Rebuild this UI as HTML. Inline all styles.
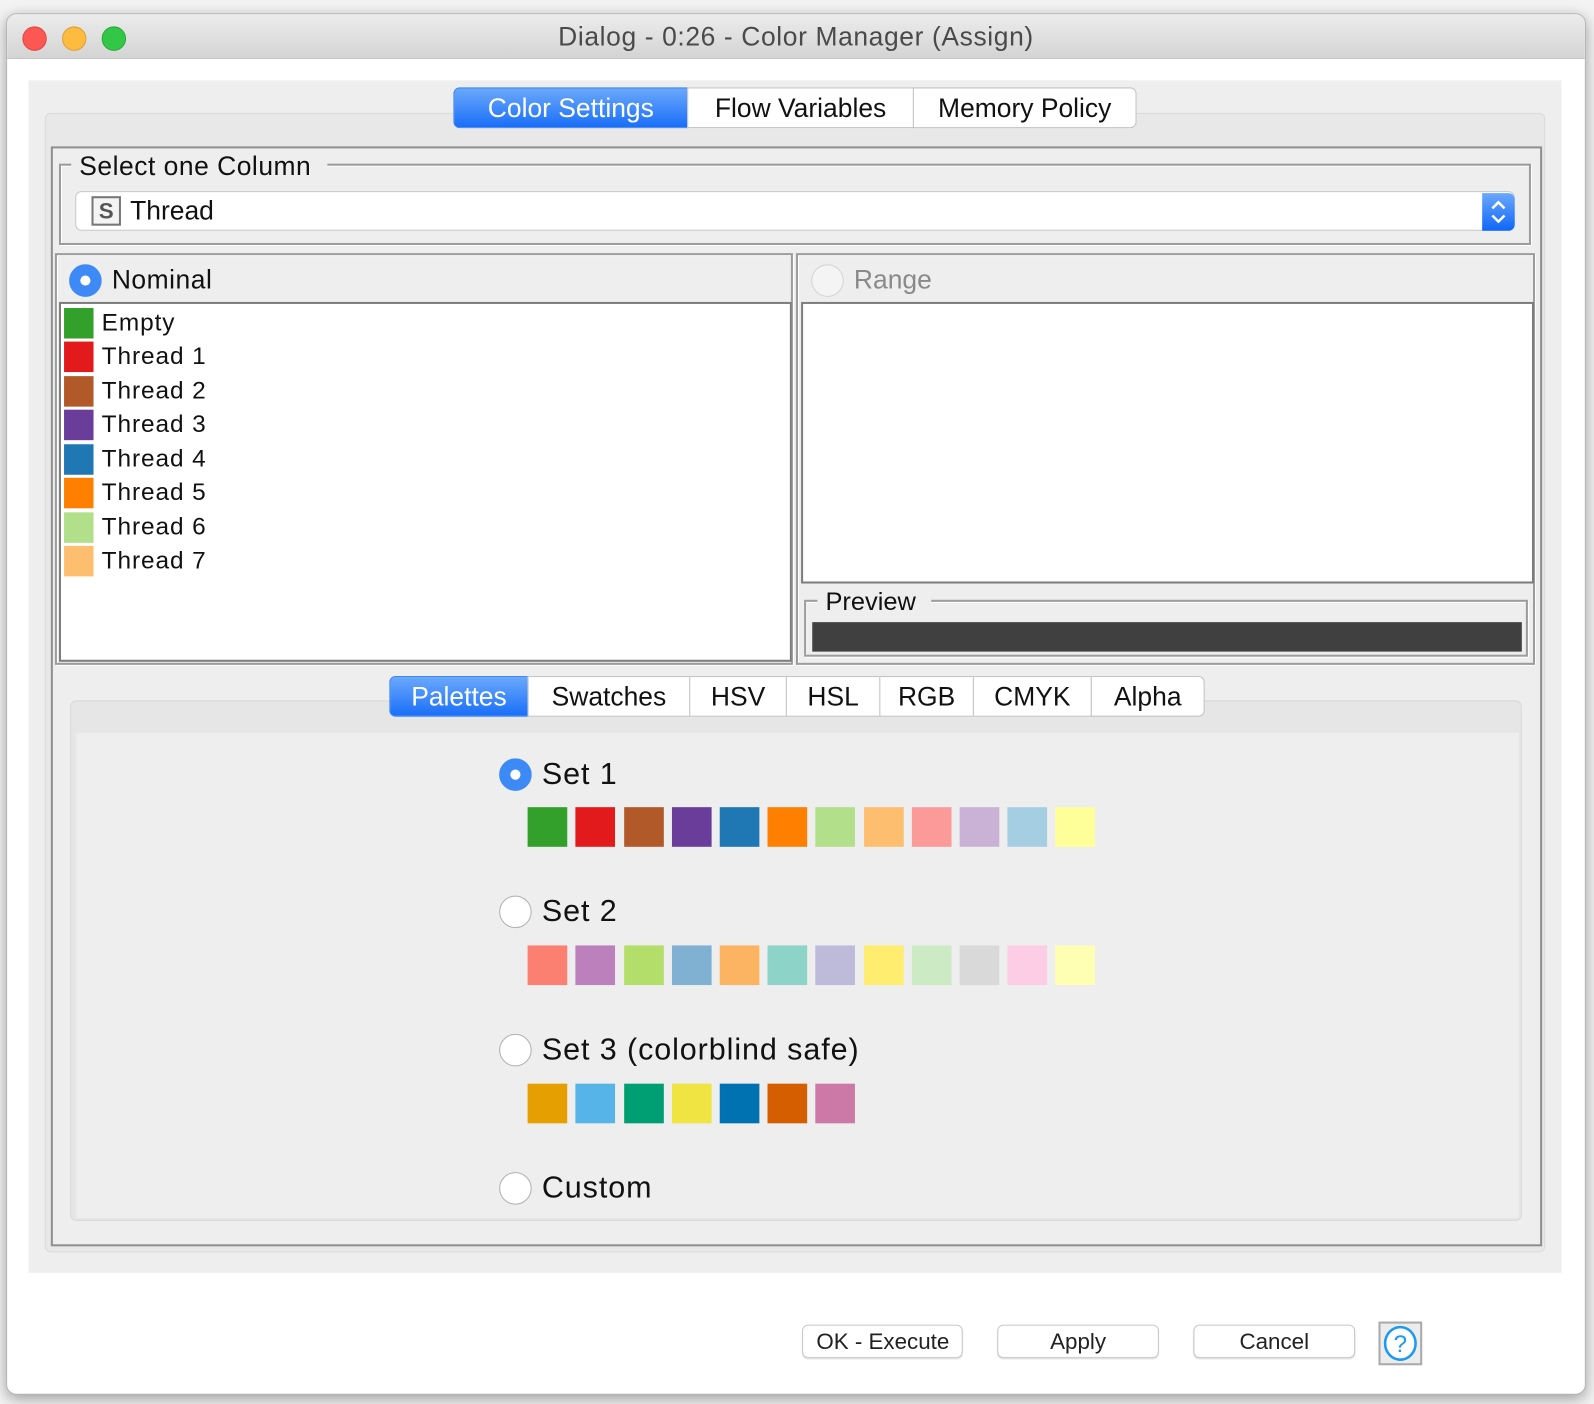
<!DOCTYPE html>
<html><head><meta charset="utf-8"><style>
*{box-sizing:border-box;margin:0;padding:0}
html,body{width:1594px;height:1404px;overflow:hidden;background:#f3f3f3;font-family:"Liberation Sans",sans-serif}
#s{position:absolute;left:0;top:0;width:1568px;height:1381px;transform:scale(1.01658);transform-origin:0 0}
.a{position:absolute}
.t{position:absolute;white-space:nowrap;color:#111}
.win{left:6px;top:13px;width:1554px;height:1359px;background:#fff;border-radius:10px;box-shadow:0 4px 14px rgba(0,0,0,.35);border:1px solid #b5b5b5;overflow:hidden}
.tb{left:0;top:0;width:100%;height:44px;background:linear-gradient(#ececec,#d4d4d4);border-bottom:1px solid #c2c2c2}
.dot{position:absolute;top:12px;width:24px;height:24px;border-radius:50%}
.etch{border:2px solid #9c9c9c;box-shadow:inset 1px 1px 0 #fff,1px 1px 0 #fff}
.tab{position:absolute;height:40px;background:#fff;border:1px solid #c3c3c3;font-size:26px;text-align:center;line-height:38px;color:#111}
.tab.on{background:linear-gradient(#6aa8fb,#1a6ff8);color:#fff;border-color:#3c86f8}
.radio{position:absolute;width:32px;height:32px;border-radius:50%;background:#fff;border:1px solid #b0b0b0}
.radio.on{background:#3d8af7;border-color:#3d8af7}
.radio.on:after{content:"";position:absolute;left:10px;top:10px;width:10px;height:10px;border-radius:50%;background:#fff}
.sw{position:absolute;width:39px;height:39px}
.row{position:absolute;left:63px;height:30px;width:400px}
.row i{position:absolute;left:0;top:0;width:29px;height:30px}
.row span{position:absolute;left:37px;top:0;font-size:24px;line-height:30px;color:#111;letter-spacing:0.9px}
.set{font-size:30px;letter-spacing:0.9px}
.btn{position:absolute;top:1303px;height:33px;background:#fff;border:1px solid #c8c8c8;border-radius:6px;font-size:22px;text-align:center;line-height:31px;color:#222;box-shadow:0 1px 1px rgba(0,0,0,.1)}
</style></head><body><div id="s">
<div class="a win">
 <div class="a tb">
  <div class="dot" style="left:15px;background:#fc5753;border:1px solid #df4744"></div>
  <div class="dot" style="left:54px;background:#fdbc40;border:1px solid #de9f34"></div>
  <div class="dot" style="left:93px;background:#33c748;border:1px solid #27aa35"></div>
  <div class="t" style="left:0;width:100%;text-align:center;top:7px;font-size:26px;letter-spacing:0.6px;color:#4a4a4a">Dialog - 0:26 - Color Manager (Assign)</div>
 </div>
</div>
<div class="a" style="left:28px;top:79px;width:1508px;height:1173px;background:#eeeeee"></div>
<div class="a" style="left:44px;top:111px;width:1476px;height:1121px;background:#e8e8e8;border:1px solid #dadada;border-radius:6px"></div>
<div class="tab on" style="left:446px;top:86px;width:231px;border-radius:6px 0 0 6px">Color Settings</div>
<div class="tab" style="left:676px;top:86px;width:223px">Flow Variables</div>
<div class="tab" style="left:898px;top:86px;width:220px;border-radius:0 6px 6px 0">Memory Policy</div>
<div class="a" style="left:50px;top:144px;width:1467px;height:1082px;background:#eeeeee;border:2px solid #8e8e8e"></div>
<div class="a etch" style="left:58px;top:161px;width:1448px;height:80px"></div>
<div class="a" style="left:70px;top:150px;width:252px;height:24px;background:#eeeeee"></div>
<div class="t" style="left:78px;top:148px;font-size:26px;letter-spacing:0.5px">Select one Column</div>
<div class="a" style="left:74px;top:188px;width:1416px;height:39px;background:#fff;border:1px solid #c8c8c8;border-radius:6px"></div>
<div class="a" style="left:90px;top:193px;width:29px;height:29px;border:2px solid #777;background:#f4f4f4;font-size:22px;font-weight:bold;text-align:center;line-height:25px;color:#555">S</div>
<div class="t" style="left:128px;top:192px;font-size:26px">Thread</div>
<div class="a" style="left:1458px;top:190px;width:32px;height:37px;background:linear-gradient(#6aa8fb,#0f66f8);border-radius:0 6px 6px 0">
<svg width="32" height="37" viewBox="0 0 32 37"><path d="M10 15l6-6 6 6M10 22l6 6 6-6" stroke="#fff" stroke-width="2.5" fill="none"/></svg></div>
<div class="a etch" style="left:54px;top:249px;width:726px;height:405px"></div>
<div class="radio on" style="left:68px;top:260px"></div>
<div class="t" style="left:110px;top:260px;font-size:26px;letter-spacing:0.5px">Nominal</div>
<div class="a" style="left:58px;top:297px;width:721px;height:354px;background:#fff;border:2px solid #7d7d7d"></div>
<div class="row" style="top:303px"><i style="background:#33a02c"></i><span>Empty</span></div>
<div class="row" style="top:336px"><i style="background:#e31a1c"></i><span>Thread 1</span></div>
<div class="row" style="top:370px"><i style="background:#b15928"></i><span>Thread 2</span></div>
<div class="row" style="top:403px"><i style="background:#6a3d9a"></i><span>Thread 3</span></div>
<div class="row" style="top:437px"><i style="background:#1f78b4"></i><span>Thread 4</span></div>
<div class="row" style="top:470px"><i style="background:#ff7f00"></i><span>Thread 5</span></div>
<div class="row" style="top:504px"><i style="background:#b2df8a"></i><span>Thread 6</span></div>
<div class="row" style="top:537px"><i style="background:#fdbf6f"></i><span>Thread 7</span></div>
<div class="a etch" style="left:783px;top:249px;width:727px;height:405px"></div>
<div class="radio" style="left:798px;top:260px;background:#f4f4f4;border-color:#d4d4d4"></div>
<div class="t" style="left:840px;top:260px;font-size:26px;color:#8a8a8a">Range</div>
<div class="a" style="left:788px;top:297px;width:721px;height:277px;background:#fff;border:2px solid #7d7d7d"></div>
<div class="a etch" style="left:791px;top:590px;width:712px;height:56px"></div>
<div class="a" style="left:804px;top:580px;width:112px;height:22px;background:#eeeeee"></div>
<div class="t" style="left:812px;top:578px;font-size:25px">Preview</div>
<div class="a" style="left:799px;top:612px;width:698px;height:29px;background:#404040"></div>
<div class="a" style="left:69px;top:689px;width:1428px;height:512px;background:#e6e6e6;border:1px solid #d8d8d8;border-radius:6px"></div>
<div class="a" style="left:75px;top:721px;width:1419px;height:477px;background:#eeeeee"></div>
<div class="tab on" style="left:383px;top:665px;width:137px;border-radius:6px 0 0 6px">Palettes</div>
<div class="tab" style="left:519px;top:665px;width:160px">Swatches</div>
<div class="tab" style="left:678px;top:665px;width:96px">HSV</div>
<div class="tab" style="left:773px;top:665px;width:93px">HSL</div>
<div class="tab" style="left:865px;top:665px;width:93px">RGB</div>
<div class="tab" style="left:957px;top:665px;width:117px">CMYK</div>
<div class="tab" style="left:1073px;top:665px;width:112px;border-radius:0 6px 6px 0">Alpha</div>
<div class="radio on" style="left:491px;top:746px"></div>
<div class="t set" style="left:533px;top:745px">Set 1</div>
<div class="radio" style="left:491px;top:881px"></div>
<div class="t set" style="left:533px;top:880px">Set 2</div>
<div class="radio" style="left:491px;top:1017px"></div>
<div class="t set" style="left:533px;top:1016px">Set 3 (colorblind safe)</div>
<div class="radio" style="left:491px;top:1153px"></div>
<div class="t set" style="left:533px;top:1152px">Custom</div>
<div class="btn" style="left:789px;width:158px;overflow:hidden;text-align:left;padding-left:13px">OK - Execute</div>
<div class="btn" style="left:981px;width:159px">Apply</div>
<div class="btn" style="left:1174px;width:159px">Cancel</div>
<div class="a" style="left:1356px;top:1300px;width:43px;height:43px;background:#ececec;border:2px solid #aaa">
<svg width="39" height="39" viewBox="0 0 39 39"><ellipse cx="19.5" cy="19.5" rx="15" ry="16" fill="#fff" stroke="#1a9af5" stroke-width="2.5"/><text x="19.5" y="28" text-anchor="middle" font-family="Liberation Sans" font-size="24" fill="#1a9af5">?</text></svg></div>
<div class="sw" style="left:519px;top:794px;background:#33a02c"></div><div class="sw" style="left:566px;top:794px;background:#e31a1c"></div><div class="sw" style="left:614px;top:794px;background:#b15928"></div><div class="sw" style="left:661px;top:794px;background:#6a3d9a"></div><div class="sw" style="left:708px;top:794px;background:#1f78b4"></div><div class="sw" style="left:755px;top:794px;background:#ff7f00"></div><div class="sw" style="left:802px;top:794px;background:#b2df8a"></div><div class="sw" style="left:850px;top:794px;background:#fdbf6f"></div><div class="sw" style="left:897px;top:794px;background:#fb9a99"></div><div class="sw" style="left:944px;top:794px;background:#cab2d6"></div><div class="sw" style="left:991px;top:794px;background:#a6cee3"></div><div class="sw" style="left:1038px;top:794px;background:#ffff99"></div>
<div class="sw" style="left:519px;top:930px;background:#fb8072"></div><div class="sw" style="left:566px;top:930px;background:#bc80bd"></div><div class="sw" style="left:614px;top:930px;background:#b3de69"></div><div class="sw" style="left:661px;top:930px;background:#80b1d3"></div><div class="sw" style="left:708px;top:930px;background:#fdb462"></div><div class="sw" style="left:755px;top:930px;background:#8dd3c7"></div><div class="sw" style="left:802px;top:930px;background:#bebada"></div><div class="sw" style="left:850px;top:930px;background:#ffed6f"></div><div class="sw" style="left:897px;top:930px;background:#ccebc5"></div><div class="sw" style="left:944px;top:930px;background:#d9d9d9"></div><div class="sw" style="left:991px;top:930px;background:#fccde5"></div><div class="sw" style="left:1038px;top:930px;background:#ffffb3"></div>
<div class="sw" style="left:519px;top:1066px;background:#e69f00"></div><div class="sw" style="left:566px;top:1066px;background:#56b4e9"></div><div class="sw" style="left:614px;top:1066px;background:#009e73"></div><div class="sw" style="left:661px;top:1066px;background:#f0e442"></div><div class="sw" style="left:708px;top:1066px;background:#0072b2"></div><div class="sw" style="left:755px;top:1066px;background:#d55e00"></div><div class="sw" style="left:802px;top:1066px;background:#cc79a7"></div>
</div></body></html>
